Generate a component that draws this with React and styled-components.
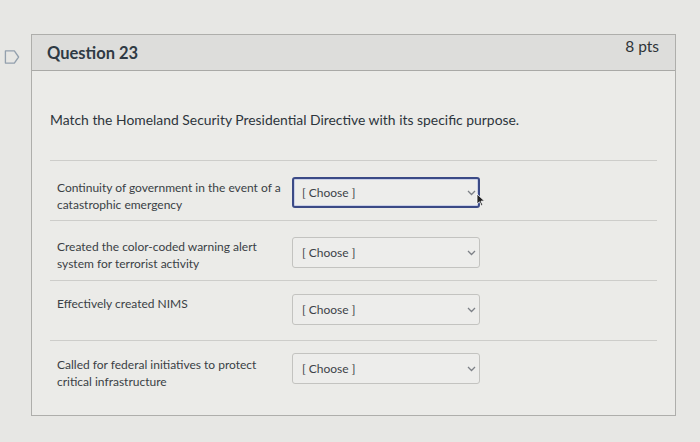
import React from "react";
import styled, { createGlobalStyle } from "styled-components";

const Global = createGlobalStyle`
  html, body { margin: 0; padding: 0; background: #e7e7e4; }
  body { font-family: Lato, "Open Sans", "Liberation Sans", sans-serif; }
`;

const Page = styled.div`
  width: 700px;
  height: 442px;
  box-sizing: border-box;
  padding: 34px 0 0 4px;
  display: flex;
  align-items: flex-start;
  gap: 11px;
  background: #e7e7e4;
`;

const FlagWrap = styled.div`
  width: 16px;
  padding-top: 15px;
  display: flex;
`;

const Card = styled.div`
  width: 645px;
  box-sizing: border-box;
  border: 1px solid #aeaeab;
  background: #ebebe8;
`;

const Header = styled.div`
  height: 36px;
  box-sizing: border-box;
  display: flex;
  justify-content: space-between;
  align-items: center;
  padding: 0 16px 0 15px;
  background: #dddddb;
  border-bottom: 1px solid #a9a9a6;
`;

const Title = styled.h2`
  margin: 0;
  font-size: 16.5px;
  font-weight: 700;
  color: #2f3a44;
`;

const Points = styled.span`
  font-size: 15.5px;
  color: #2f3438;
  align-self: flex-start;
  margin-top: 2px;
`;

const Body = styled.div`
  padding: 39px 18px 15px 18px;
`;

const Prompt = styled.p`
  margin: 0 0 30px 0;
  font-size: 13.9px;
  line-height: 20px;
  color: #2d353c;
`;

const Row = styled.div`
  display: grid;
  grid-template-columns: 235px 188px;
  align-items: start;
  height: 60px;
  box-sizing: border-box;
  padding: ${(p) => p.$pad}px 0 0 7px;
  border-top: 1px solid #cdcdca;
`;

const Label = styled.div`
  font-size: 12px;
  line-height: 17px;
  color: #3a3f45;
  padding-top: ${(p) => p.$top}px;
`;

const SelectBox = styled.div`
  position: relative;
  height: 31px;
  box-sizing: border-box;
  display: flex;
  align-items: center;
  justify-content: space-between;
  padding: 0 ${(p) => (p.$focused ? 2 : 3)}px 0 ${(p) => (p.$focused ? 8 : 9)}px;
  border: ${(p) => (p.$focused ? "2px solid #3b4a86" : "1px solid #c3c3c0")};
  box-shadow: ${(p) => (p.$focused ? "inset 0 0 0 1px #c9cfe6" : "none")};
  border-radius: 3px;
  background: #ededeb;
  font-size: 12px;
  color: #3d4348;
`;

const Cursor = styled.svg`
  position: absolute;
  right: -8px;
  top: 14px;
`;

const Chevron = () => (
  <svg width="9" height="6" viewBox="0 0 9 6">
    <path d="M1 1 L4.5 4.5 L8 1" fill="none" stroke="#7d8187" strokeWidth="1.3" />
  </svg>
);

const Flag = () => (
  <svg width="17" height="16" viewBox="0 0 17 16">
    <path
      d="M1.5 1.5 H11 L15.5 8 L11 14.5 H1.5 Z"
      fill="none"
      stroke="#93a0ad"
      strokeWidth="1.4"
      strokeLinejoin="round"
    />
  </svg>
);

const rows = [
  { label: "Continuity of government in the event of a catastrophic emergency", focused: true, top: 2, pad: 16 },
  { label: "Created the color-coded warning alert system for terrorist activity", top: 1, pad: 16 },
  { label: "Effectively created NIMS", top: 1, pad: 13 },
  { label: "Called for federal initiatives to protect critical infrastructure", top: 3, pad: 12 },
];

export default function App() {
  return (
    <>
      <Global />
      <Page>
        <FlagWrap>
          <Flag />
        </FlagWrap>
        <Card>
          <Header>
            <Title>Question 23</Title>
            <Points>8 pts</Points>
          </Header>
          <Body>
            <Prompt>Match the Homeland Security Presidential Directive with its specific purpose.</Prompt>
            {rows.map((r, i) => (
              <Row key={i} $pad={r.pad}>
                <Label $top={r.top}>{r.label}</Label>
                <SelectBox $focused={r.focused}>
                  <span>[ Choose ]</span>
                  <Chevron />
                  {r.focused && (
                    <Cursor width="10" height="14" viewBox="0 0 10 14">
                      <path d="M1 1 L1 11 L3.5 8.8 L5.5 13 L7 12.3 L5 8.2 L8.5 8 Z" fill="#222" stroke="#fff" strokeWidth="0.8" />
                    </Cursor>
                  )}
                </SelectBox>
              </Row>
            ))}
          </Body>
        </Card>
      </Page>
    </>
  );
}
